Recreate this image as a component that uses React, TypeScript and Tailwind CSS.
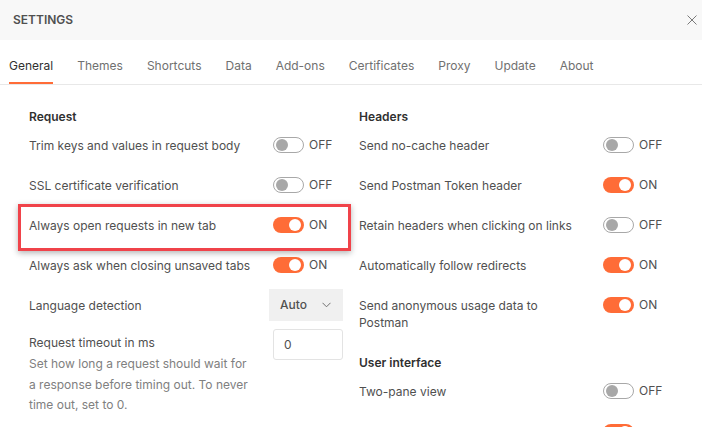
import React from "react";

const FONT = { fontFamily: "Inter, 'Noto Sans', 'Liberation Sans', sans-serif" };

const tabs = ["General", "Themes", "Shortcuts", "Data", "Add-ons", "Certificates", "Proxy", "Update", "About"];

function Toggle({ on }: { on: boolean }) {
  return (
    <div className="flex items-center gap-[5px]">
      {on ? (
        <div className="w-[31px] h-4 rounded-full bg-[#ff6c37] flex items-center justify-end px-[3px]">
          <div className="w-3 h-3 rounded-full bg-white" />
        </div>
      ) : (
        <div className="w-[31px] h-4 rounded-full border border-[#a8a8a8] bg-white flex items-center px-[2px]">
          <div className="w-3 h-3 rounded-full bg-[#a8a8a8]" />
        </div>
      )}
      <span className="text-[12px] leading-4 text-[#505050]">{on ? "ON" : "OFF"}</span>
    </div>
  );
}

function Row({ label, on }: { label: string; on: boolean }) {
  return (
    <div className="h-10 flex items-center">
      <div className="flex-1 pt-[2px] text-[12px] text-[#505050]">{label}</div>
      <div className="w-[70px]">
        <Toggle on={on} />
      </div>
    </div>
  );
}

function Heading({ children }: { children: React.ReactNode }) {
  return <div className="h-4 leading-4 text-[12px] font-semibold text-[#303030]">{children}</div>;
}

export default function App() {
  return (
    <div className="w-[702px] h-[427px] overflow-hidden bg-white" style={FONT}>
      {/* Title bar */}
      <div className="h-10 bg-[#f8f8f8] flex items-center justify-between pl-[13px] pr-[5px]">
        <span className="text-[12px] font-semibold text-[#505050]">SETTINGS</span>
        <svg width="10" height="10" viewBox="0 0 10 10">
          <path d="M0.5 0.5 L9.5 9.5 M9.5 0.5 L0.5 9.5" stroke="#7a7a7a" strokeWidth="1" fill="none" />
        </svg>
      </div>

      {/* Tabs */}
      <div className="h-[45px] border-b border-[#e8e8e8] flex pl-[9px] gap-6">
        {tabs.map((t, i) => (
          <div key={t} className="flex flex-col justify-end">
            <div className={`text-[12px] leading-4 pb-[8px] ${i === 0 ? "text-[#303030]" : "text-[#707070]"}`}>{t}</div>
            <div className={`h-[2px] ${i === 0 ? "bg-[#ff6c37]" : "bg-transparent"}`} />
          </div>
        ))}
      </div>

      {/* Content */}
      <div className="grid grid-cols-[314px_314px] gap-x-4 pl-[29px] pt-6">
        {/* Left column */}
        <div className="flex flex-col">
          <Heading>Request</Heading>
          <Row label="Trim keys and values in request body" on={false} />
          <Row label="SSL certificate verification" on={false} />
          <div className="relative">
            <Row label="Always open requests in new tab" on={true} />
            <div className="absolute left-[-11px] right-[-8px] top-[-1px] bottom-[-6px] border-[3px] border-[#f0434a] shadow-[0_2px_6px_rgba(0,0,0,0.3)] pointer-events-none" />
          </div>
          <Row label="Always ask when closing unsaved tabs" on={true} />
          <div className="h-10 flex items-center">
            <div className="flex-1 pt-[2px] text-[12px] text-[#505050]">Language detection</div>
            <div className="w-[74px] h-8 bg-[#f0f0f0] flex items-center pl-[11px] pr-[12px] justify-between">
              <span className="text-[12px] font-medium text-[#505050]">Auto</span>
              <svg width="9" height="6" viewBox="0 0 9 6">
                <path d="M0.5 0.8 L4.5 4.8 L8.5 0.8" stroke="#707070" strokeWidth="1" fill="none" />
              </svg>
            </div>
          </div>
          <div className="flex items-start pt-1">
            <div className="flex-1 pt-[4px]">
              <div className="text-[12px] leading-5 text-[#505050]">Request timeout in ms</div>
              <div className="text-[12px] leading-[20.5px] pt-px text-[#808080] w-[225px]">
                Set how long a request should wait for a response before timing out. To never time out, set to 0.
              </div>
            </div>
            <div className="w-[70px] h-[31px] border border-[#e3e3e3] rounded-[3px] flex items-center pl-[10px] text-[12px] text-[#505050]">
              0
            </div>
          </div>
        </div>

        {/* Right column */}
        <div className="flex flex-col">
          <Heading>Headers</Heading>
          <Row label="Send no-cache header" on={false} />
          <Row label="Send Postman Token header" on={true} />
          <Row label="Retain headers when clicking on links" on={false} />
          <Row label="Automatically follow redirects" on={true} />
          <div className="flex items-start">
            <div className="flex-1 pt-[12px] text-[12px] leading-[17px] text-[#505050] pr-16">
              Send anonymous usage data to Postman
            </div>
            <div className="w-[70px] pt-3">
              <Toggle on={true} />
            </div>
          </div>
          <div className="mt-6">
            <Heading>User interface</Heading>
          </div>
          <Row label="Two-pane view" on={false} />
          <div className="h-10 mt-px flex items-center justify-end">
            <div className="w-[70px]">
              <Toggle on={true} />
            </div>
          </div>
        </div>
      </div>
    </div>
  );
}
